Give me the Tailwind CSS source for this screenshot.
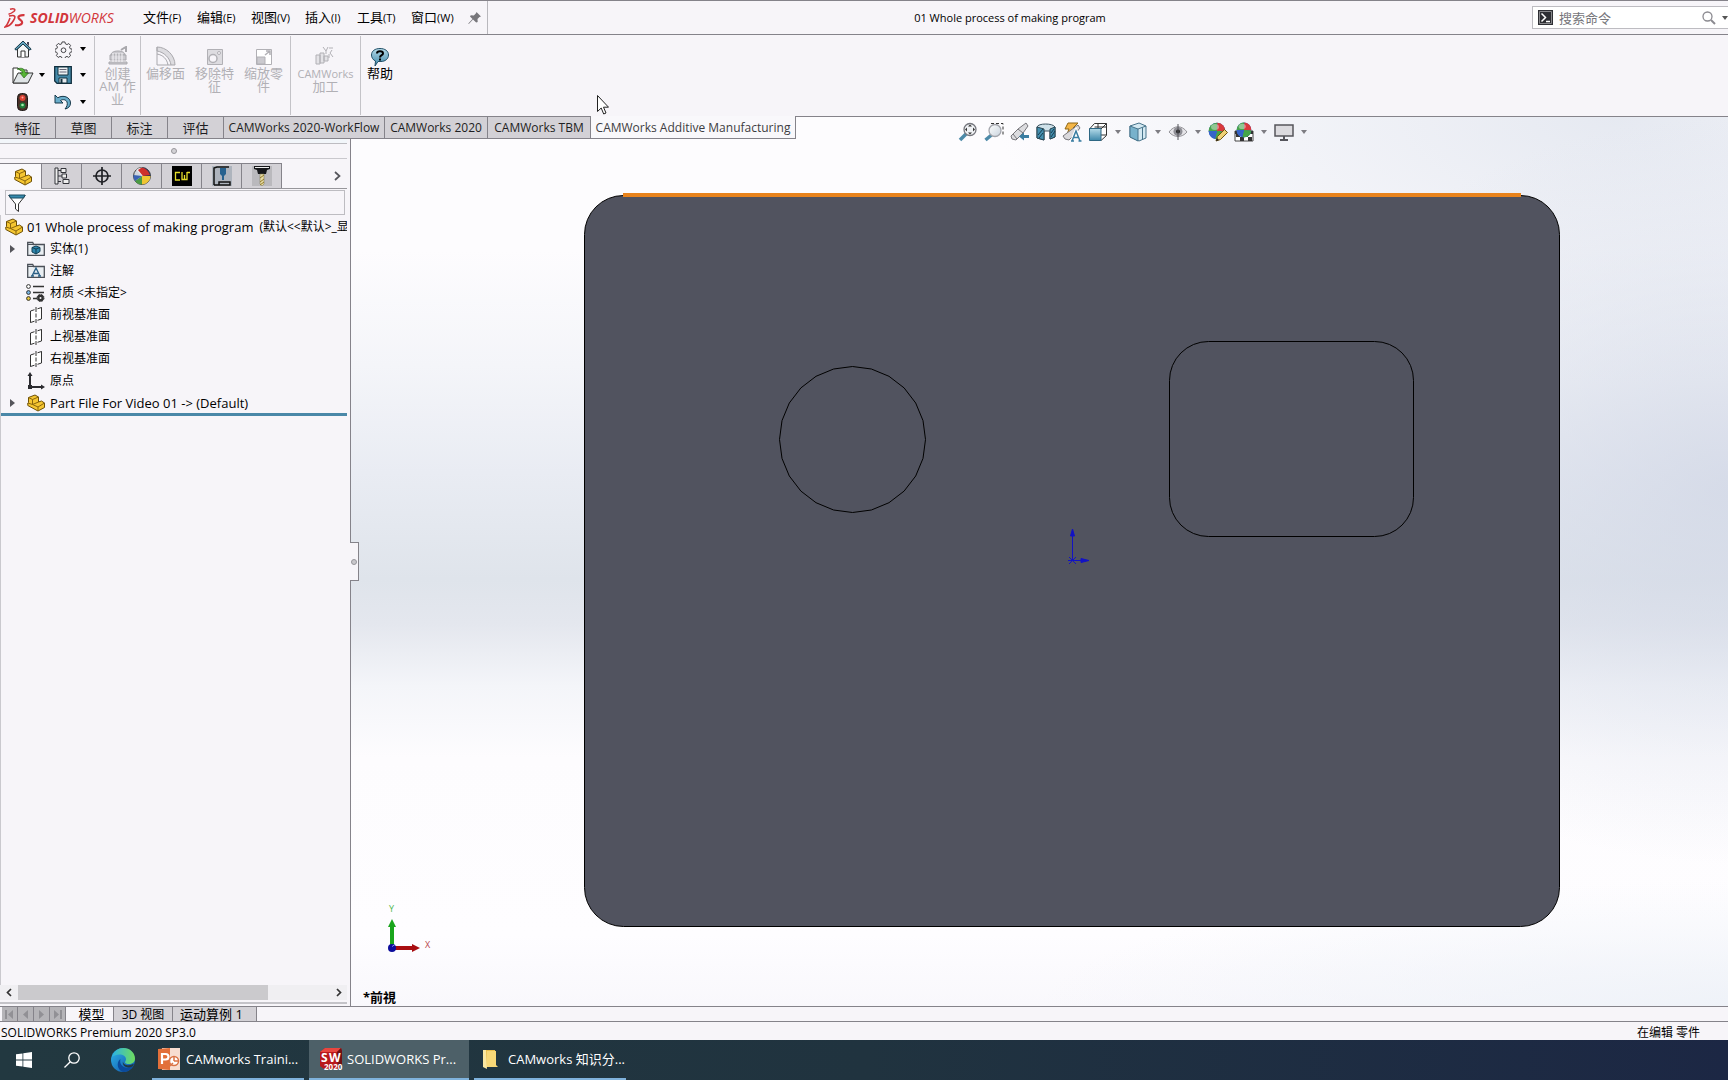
<!DOCTYPE html>
<html lang="zh-CN">
<head>
<meta charset="utf-8">
<title>SOLIDWORKS - 01 Whole process of making program</title>
<script src="https://cdn.jsdelivr.net/npm/@tailwindcss/browser@4"></script>
</head>
<body class="h-screen overflow-hidden flex flex-col bg-[#f7f5f9] text-black text-[12px] leading-4 font-['Open_Sans','Noto_Sans_CJK_SC',sans-serif]">

<svg class="absolute w-0 h-0" aria-hidden="true">
  <defs>
    <linearGradient id="blue" x1="0" y1="0" x2="0" y2="1"><stop offset="0" stop-color="#b5dbe9"/><stop offset="1" stop-color="#3f88aa"/></linearGradient>
    <linearGradient id="glass" x1="0" y1="0" x2="1" y2="1"><stop offset="0" stop-color="#fff"/><stop offset="1" stop-color="#c9d3dd"/></linearGradient>
    <linearGradient id="edgeBlue" x1="0" y1="0" x2="1" y2="1"><stop offset="0" stop-color="#2fb5e8"/><stop offset="1" stop-color="#0d4fa8"/></linearGradient>
    <linearGradient id="edgeGreen" x1="0" y1="0" x2="1" y2="0"><stop offset="0" stop-color="#2bb3e6"/><stop offset="1" stop-color="#6fdc5c"/></linearGradient>
  </defs>
  <symbol id="caret" viewBox="0 0 6 4"><path d="M0 0h6L3 4z" fill="currentColor"/></symbol>
  <symbol id="part" viewBox="0 0 18 18"><path d="M1.500 3.500L8 1l3.500 2v5L14.500 7l3 2v4.500L11 17 .8 11.500V9l.7-.5z" fill="#f5c631" stroke="#6d5008"/><path d="M1.500 3.500L5.500 5.500v5L11 13l6.500-4M5.500 5.500l6-2.500M11 13v4M11.500 8l-6 2.500-4.500-1.500" fill="none" stroke="#8a660d"/></symbol>
  <symbol id="plane" viewBox="0 0 18 18"><path d="M3.500 5v11.500M14.500 1.500V13" stroke="#333" fill="none"/><path d="M3.500 5l11-3.500V13l-11 3.500z" fill="#fff"/><path d="M3.500 5v11.500l4-1.300M14.500 13V1.500l-4 1.300M3.500 5l4-1.300M14.500 13l-4 1.300" stroke="#333" fill="none"/><path d="M9 1v5M9 7.500v4M9 13v4" stroke="#333"/></symbol>
  <symbol id="folderbox" viewBox="0 0 18 18"><path d="M.7 15.300V2.500h5l1 2h10.600v10.800z" fill="#e9eef2" stroke="#4b5058" stroke-width="1.300"/><path d="M1 4.500h6" stroke="#4b5058"/></symbol>
  <symbol id="ball" viewBox="0 0 18 18"><circle cx="9" cy="9" r="8.300" fill="#3b63c6"/><path d="M9 9L.8 10A8.300 8.300 0 0 1 9.500.7z" fill="#47a34b"/><path d="M9 9L9.500.7a8.300 8.300 0 0 1 7.800 8.800z" fill="#d9393b"/><path d="M9 9l8.300.5A8.300 8.300 0 0 1 7 17z" fill="#44a548"/><path d="M9 9l-2 8A8.300 8.300 0 0 1 .7 9z" fill="#3564c9"/><ellipse cx="7" cy="5" rx="4" ry="3" fill="#fff" opacity=".4"/></symbol>
</svg>

<!-- Title bar -->
<header class="h-[35px] shrink-0 flex items-stretch border-t border-b border-[#85838a]">
  <div class="w-[122px] flex items-center pl-1 gap-1 text-[#d2353b]">
    <svg class="w-[22px] h-[22px] shrink-0" viewBox="0 0 22 22" fill="none" stroke="currentColor"><path d="M6 2.200c4.500-1.200 6 .3 3.800 2.300C8 6 6.500 6.800 4.500 7.200" stroke-width="1.600"/><path d="M5 9c6.500-1.500 7 .5 4.500 4.500C7.500 17 4 19.500 1 20c2.500-2 3.500-5 5-9" stroke-width="1.600"/><path d="M20.500 8.200c-4-.3-6.800.8-5.800 3 .8 1.600 4 2.600 3.500 4.600-.5 2.300-4.500 2.800-7.200 2.200" stroke-width="2.200"/></svg>
    <span class="text-[14px] italic"><b>SOLID</b>WORKS</span>
  </div>
  <nav class="flex items-center pl-[21px] gap-[15px] text-[13px]" aria-label="菜单">
    <button class="w-[39px] text-left whitespace-nowrap">文件<span class="text-[11px]">(F)</span></button>
    <button class="w-[39px] text-left whitespace-nowrap">编辑<span class="text-[11px]">(E)</span></button>
    <button class="w-[39px] text-left whitespace-nowrap">视图<span class="text-[11px]">(V)</span></button>
    <button class="w-[37px] text-left whitespace-nowrap">插入<span class="text-[11px]">(I)</span></button>
    <button class="w-[39px] text-left whitespace-nowrap">工具<span class="text-[11px]">(T)</span></button>
    <button class="w-[44px] text-left whitespace-nowrap">窗口<span class="text-[11px]">(W)</span></button>
  </nav>
  <button class="w-[33px] flex items-center justify-end pr-[5px] border-r border-[#b9b8bd]" aria-label="固定">
    <svg class="w-[14px] h-[14px]" viewBox="0 0 14 14" fill="#77767b"><path d="M8.500 1l4.500 4.500-1.500.5-2 2 .2 3-1.500.5L5 8.500.8 13l-.5-.5L4.500 8 2 5.500l.8-1.200 3 .2L8 2.300z"/></svg>
  </button>
  <div class="flex-1 flex items-center justify-center text-[11px]">01 Whole process of making program</div>
  <div class="w-[196px] flex items-center">
    <div class="h-[23px] w-full bg-white border border-r-0 border-[#bdbcc1] flex items-center pl-[5px] gap-[6px]">
      <svg class="w-[15px] h-[15px] shrink-0" viewBox="0 0 15 15"><path d="M0 0h15v15H0z" fill="#2d2e33"/><path d="M1.500 1.500h12v12h-12z" fill="none" stroke="#88888c"/><path d="M3.500 3.500l4 4-4 4M8 11.500h4" fill="none" stroke="#fff" stroke-width="1.500"/></svg>
      <input class="w-[142px] min-w-0 outline-none text-[13px] placeholder:text-[#77767b]" type="text" placeholder="搜索命令" aria-label="搜索命令">
      <svg class="w-[14px] h-[14px] shrink-0" viewBox="0 0 14 14" fill="none" stroke="#8b8a90"><circle cx="5.500" cy="5.500" r="4.500" stroke-width="1.300"/><path d="M9 9l4 4" stroke-width="2"/></svg>
      <svg class="w-[6px] h-1 shrink-0 text-[#555]"><use href="#caret"/></svg>
    </div>
  </div>
</header>

<!-- Ribbon -->
<section class="h-[81px] shrink-0 flex py-px text-[13px] leading-[13px]" aria-label="功能区">
  <div class="w-[94px] grid grid-cols-[48px_46px] grid-rows-3">
    <button class="flex items-center pl-[14px]" aria-label="主页"><svg class="w-[18px] h-[18px]" viewBox="0 0 18 18"><path d="M3.500 9v8h11V9L9 4z" fill="#f3f5f6" stroke="#333"/><path d="M7 17v-6h4v6" fill="#fff" stroke="#333"/><path d="M13 2h2v4l-2-2z" fill="#445"/><path d="M9 1L.8 9l1.200 1.200L9 4l7 6.200L17.200 9z" fill="#65a9c4" stroke="#173747"/></svg></button>
    <button class="flex items-center gap-2 pl-[7px]" aria-label="选项"><svg class="w-[17px] h-[17px]" viewBox="0 0 18 18" fill="none" stroke="#3a3a3f"><path d="M7.500 1h3l.5 2 1.800.8 1.800-1.100 1.900 2-1.100 1.800.7 1.700 2 .4v2.800l-2 .5-.7 1.700 1.100 1.900-2 1.900-1.800-1.100-1.700.7-.5 2h-3l-.5-2-1.700-.7-1.900 1.100-1.900-2 1.100-1.800-.8-1.700-1.900-.5V8.600l2-.5.7-1.700-1.100-1.800 2-2 1.800 1.100L7 3z"/><circle cx="9" cy="9.800" r="2.500"/></svg><svg class="w-[6px] h-1"><use href="#caret"/></svg></button>
    <button class="flex items-center gap-[5px] pl-3" aria-label="打开"><svg class="w-[22px] h-[18px]" viewBox="0 0 22 18"><path d="M1 17V2h5l2 2h7v13z" fill="#fff" stroke="#333"/><path d="M1 17L6 7h15l-5 10z" fill="#dfe4e6" stroke="#333"/><path d="M5 3c5-2 8 0 8.500 4h3L12 12 8 7h2.500C10 5 8 3.500 5 3z" fill="#56b436" stroke="#1f5b12" stroke-width=".6"/></svg><svg class="w-[6px] h-1"><use href="#caret"/></svg></button>
    <button class="flex items-center gap-2 pl-[6px]" aria-label="保存"><svg class="w-[18px] h-[18px]" viewBox="0 0 18 18"><path d="M.7.700h16.600v16.600H3L.7 15z" fill="#4489a8" stroke="#12303f" stroke-width="1.300"/><path d="M4 1h10v8H4z" fill="#eef2f4" stroke="#12303f"/><path d="M5.500 3.500h7M5.500 6h7" stroke="#667"/><path d="M5 12h8v5H5z" fill="#e5eaee" stroke="#12303f"/><path d="M6.500 13h2v4h-2z" fill="#12303f"/></svg><svg class="w-[6px] h-1"><use href="#caret"/></svg></button>
    <button class="flex items-center pl-[17px]" aria-label="重建"><svg class="w-[11px] h-[18px]" viewBox="0 0 11 18"><rect x=".5" y=".5" width="10" height="17" rx="4" fill="#4a3028" stroke="#1e1a18"/><circle cx="5.500" cy="5" r="3" fill="#dc4234"/><circle cx="5.500" cy="4.500" r="1" fill="#ffaaa0"/><circle cx="5.500" cy="12.500" r="3" fill="#1f7b39"/><circle cx="5.500" cy="12" r="1.300" fill="#a3ecac"/></svg></button>
    <button class="flex items-center gap-2 pl-[6px]" aria-label="撤销"><svg class="w-[18px] h-[16px]" viewBox="0 0 18 16"><path d="M1 1v8h8L6.500 6.500C9 5 12 5.500 13 8c.8 2.300 0 4.500-2 7 3-.5 5.500-2.500 5.500-6C16.500 3 9 .5 3.800 3.800z" fill="#6aaecb" stroke="#17384a"/></svg><svg class="w-[6px] h-1"><use href="#caret"/></svg></button>
  </div>
  <div class="w-[47px] border-l border-r border-[#c4c3c8] flex justify-center text-[#b1b0b5]">
    <button disabled class="w-9 flex flex-col items-center pt-[10px] whitespace-nowrap"><svg class="w-5 h-[21px] shrink-0" viewBox="0 0 20 21" fill="#cbcacf" stroke="#a9a8ad"><path d="M3 9c0-2 2-4 7-4s7 2 7 4z"/><path d="M2 9h16v5H2zM1 16h18v2H1z"/><path d="M5 7v9M8 7v9M11 7v9M14 7v9" stroke="#f7f5f9"/><path d="M13 4l3-2 2-1v5" fill="none" stroke-width="2"/></svg><span>创建<br>AM 作<br>业</span></button>
  </div>
  <div class="w-[150px] border-r border-[#c4c3c8] flex text-[#b1b0b5]">
    <button disabled class="w-[49px] flex flex-col items-center pt-[10px]"><svg class="w-5 h-[21px] shrink-0" viewBox="0 0 20 21" fill="none" stroke="#a9a8ad"><path d="M1 1c9 0 18 8 18 18h-4C14 12 8 6 1 5z" fill="#dddce0"/><path d="M1 1v18h14M1 8c6 1 10 5 11 11"/></svg><span>偏移面</span></button>
    <button disabled class="w-[49px] flex flex-col items-center pt-[10px]"><svg class="w-5 h-[21px] shrink-0" viewBox="0 0 20 21" stroke="#b1b0b5"><path d="M2.500 3.500h15v15h-15z" fill="#dddce0"/><circle cx="8" cy="12.500" r="4" fill="#f7f5f9" stroke-width="1.500"/><circle cx="14" cy="7" r="1.500" fill="#f7f5f9"/></svg><span class="w-10">移除特征</span></button>
    <button disabled class="w-[49px] flex flex-col items-center pt-[10px]"><svg class="w-5 h-[21px] shrink-0" viewBox="0 0 20 21" stroke="#b1b0b5"><path d="M2.500 3.500h15v15h-15z" fill="#fff"/><path d="M3 11h8v7H3z" fill="#cbcacf"/><path d="M11 9l5-4M12 5h4v4" fill="none" stroke-width="1.500"/></svg><span class="w-10">缩放零件</span></button>
  </div>
  <div class="w-[70px] border-r border-[#c4c3c8] flex justify-center text-[#b1b0b5]">
    <button disabled class="flex flex-col items-center pt-[10px] text-[11px]"><svg class="w-5 h-[21px] shrink-0" viewBox="0 0 20 21" stroke="#b1b0b5" fill="#e4e3e7"><path d="M1 9h4v9H1zM5 7h4v10H5zM9 10h4v5H9z"/><path d="M8 1l3 4 2-4M11 5v3M14 2h4M17 4l-2 3 3 4M14 8v4" fill="none"/></svg><span>CAMWorks</span><span class="text-[13px]">加工</span></button>
  </div>
  <button class="w-[38px] flex flex-col items-center pt-[10px]"><svg class="w-5 h-[21px] shrink-0" viewBox="0 0 20 21"><path d="M10 2.500c5 0 8.500 2.500 8.500 6.500S15 15.500 11 15.500H8L5 20l.5-5C3 14 1.500 11.500 1.500 9 1.500 5 5 2.500 10 2.500z" fill="url(#blue)" stroke="#215068"/><path d="M7 7.500c0-3 6-3 6 0 0 2-3 1.500-3 4" fill="none" stroke="#000" stroke-width="2"/><path d="M9 12.500h2v2H9z"/></svg><span>帮助</span></button>
</section>

<main class="relative flex-1 min-h-0 flex border-t border-b border-[#85838a]">

  <!-- Command manager tabs, laid over the top of the panel and the graphics area -->
  <nav class="absolute -top-px left-0 z-10 h-[23px] flex border-t border-b border-[#85838a] bg-[#d3d1d6] text-[12px] text-[#1e1e22]" aria-label="命令管理器">
    <button class="w-14 border-r border-[#85838a] text-[13px]">特征</button>
    <button class="w-14 border-r border-[#85838a] text-[13px]">草图</button>
    <button class="w-14 border-r border-[#85838a] text-[13px]">标注</button>
    <button class="w-14 border-r border-[#85838a] text-[13px]">评估</button>
    <button class="w-[161px] border-r border-[#85838a] whitespace-nowrap">CAMWorks 2020-WorkFlow</button>
    <button class="w-[103px] border-r border-[#85838a] whitespace-nowrap">CAMWorks 2020</button>
    <button class="w-[103px] border-r border-[#85838a] whitespace-nowrap">CAMWorks TBM</button>
    <button class="w-[205px] -mt-px pt-px border-r border-[#85838a] bg-[#f9f8fb] text-[#3d3d42] whitespace-nowrap">CAMWorks Additive Manufacturing</button>
  </nav>

  <!-- Feature manager -->
  <aside class="w-[351px] shrink-0 flex flex-col pt-[22px] border-r border-[#85838a]">
    <div class="h-[5px] mr-[3px] border-b border-[#bdbcc1] bg-[#f2f6fa]"></div>
    <div class="h-[15px] mr-[3px] border-b border-[#c9c8cd] flex items-center justify-center"><span class="size-[6px] rounded-full border border-[#97969b] bg-[#d3d2d6]"></span></div>
    <div class="mt-1 mr-[3px] h-[26px] flex border-b border-[#97969b]">
      <button class="w-[41px] h-[26px] flex items-center justify-center pl-1 border-t border-[#85838a] bg-[#f9f8fb]" aria-label="特征树"><svg class="w-[18px] h-[18px]"><use href="#part"/></svg></button>
      <button class="w-10 border-t border-l border-[#85838a] bg-[#d3d1d6] flex items-center justify-center" aria-label="属性"><svg class="w-[18px] h-[18px]" viewBox="0 0 18 18" fill="#eee" stroke="#33343a"><path d="M4 1v16M4 3.500h4M4 9h5M4 14.500h4" fill="none"/><path d="M2 1h3v16H2zM8 1.500h5v4H8zM9 7h4.500v4H9zM10 12.500h6v4h-6z"/></svg></button>
      <button class="w-10 border-t border-l border-[#85838a] bg-[#d3d1d6] flex items-center justify-center" aria-label="尺寸"><svg class="w-[18px] h-[18px]" viewBox="0 0 18 18" fill="none" stroke="#1f2025" stroke-width="1.700"><circle cx="9" cy="9" r="6"/><path d="M9 0v18M0 9h18"/></svg></button>
      <button class="w-10 border-t border-l border-[#85838a] bg-[#d3d1d6] flex items-center justify-center" aria-label="外观"><svg class="w-[18px] h-[18px]" viewBox="0 0 18 18"><circle cx="9" cy="9" r="8.500" fill="#cfd5de" stroke="#444"/><path d="M9 9L9 .5a8.500 8.500 0 0 1 8.500 8.500z" fill="#23355c"/><path d="M9 9L3 3A8.500 8.500 0 0 1 9 .5l6 6z" fill="#e6e9ee"/><path d="M9 9l8.500 0A8.500 8.500 0 0 1 9 17.500z" fill="#efc531"/><path d="M9 9v8.500A8.500 8.500 0 0 1 2 14z" fill="#4b9a43"/><path d="M9 9L2 14A8.500 8.500 0 0 1 .5 8z" fill="#3a62b4"/><path d="M5 3l5 6 7-1C15 3 11 0 8 1z" fill="#cf2f2b"/></svg></button>
      <button class="w-10 border-t border-l border-[#85838a] bg-[#d3d1d6] flex items-center justify-center" aria-label="CAMWorks"><svg class="w-5 h-5" viewBox="0 0 20 20"><path d="M0 0h20v20H0z"/><path d="M8 6.500H3.500v7.500H8M10 6v7.500h5V6M12.500 9v4.500M15 6.500h3" fill="none" stroke="#e6df2a" stroke-width="1.300"/></svg></button>
      <button class="w-10 border-t border-l border-[#85838a] bg-[#d3d1d6] flex items-center justify-center" aria-label="机床"><svg class="w-5 h-5" viewBox="0 0 20 20"><path d="M0 0h20v20H0z" fill="#aeb4bd"/><path d="M2 19V2l3-1h12M2 19h16v-3H7v3" fill="none" stroke="#111" stroke-width="1.500"/><path d="M8 2h6v6l-2 2v4h-2v-4L8 8z" fill="#27628f"/></svg></button>
      <button class="w-[41px] border-t border-l border-r border-[#85838a] bg-[#d3d1d6] flex items-center justify-center" aria-label="刀具"><svg class="w-5 h-5" viewBox="0 0 20 20"><path d="M0 0h20v20H0z" fill="#bab9bd"/><path d="M2 0h16v3l-3 1-1 4H6L5 4 2 3z" fill="#17181b"/><path d="M3 1.500h14" stroke="#eee"/><path d="M8 8h4v10l-2 2-2-2z" fill="#e9dca4" stroke="#77714f" stroke-width=".5"/><path d="M8 12l4-3M8 16l4-3M8 19l4-3" stroke="#8f7a28"/></svg></button>
      <button class="ml-auto w-5 flex items-center justify-center" aria-label="更多"><svg class="w-[7px] h-[10px]" viewBox="0 0 7 10"><path d="M1 1l4.500 4L1 9" fill="none" stroke="#55555b" stroke-width="1.700"/></svg></button>
    </div>
    <label class="mt-px ml-[5px] mr-[5px] h-[25px] border border-[#bdbcc1] flex items-center pl-[2px]">
      <svg class="w-[18px] h-[18px]" viewBox="0 0 18 18"><path d="M.7 1.500h16.600L10.500 10v7.500L7.500 15v-5z" fill="#fff" stroke="#333"/><path d="M1 1h16l-1.500 3h-13z" fill="#368aad" stroke="#184c62"/></svg>
      <input class="flex-1 min-w-0 bg-transparent outline-none" type="text" aria-label="过滤">
    </label>
    <div class="mr-[3px] flex-1 min-h-0 overflow-hidden border-l border-[#cac9ce] whitespace-nowrap">
      <ul class="pt-px border-b-[3px] border-[#4a88a8] h-[201px]">
        <li class="h-[22px] flex items-center pl-1"><svg class="w-[18px] h-[18px] shrink-0"><use href="#part"/></svg><span class="pl-1 text-[13px]">01 Whole process of making program</span><span class="pl-[6px]">(默认&lt;&lt;默认&gt;_显示状态</span></li>
        <li class="h-[22px] flex items-center pl-[9px]"><svg class="w-[5px] h-2 mr-3" viewBox="0 0 5 8"><path d="M0 0l5 4-5 4z" fill="#55555b"/></svg><svg class="w-[18px] h-[18px]" viewBox="0 0 18 18"><use href="#folderbox"/><path d="M9 6l4 1.500v4L9 14l-4-2V7.500z" fill="#2d86ad" stroke="#123f55"/><path d="M5 7.500L9 9l4-1.500M9 9v5" stroke="#123f55" fill="none"/></svg><span class="pl-[5px]">实体(1)</span></li>
        <li class="h-[22px] flex items-center pl-[26px]"><svg class="w-[18px] h-[18px]" viewBox="0 0 18 18"><use href="#folderbox"/><path d="M5 14L9 6l4 8M6.500 11.500h5M4 14h3M11 14h3" fill="none" stroke="#2d6187" stroke-width="1.400"/></svg><span class="pl-[5px]">注解</span></li>
        <li class="h-[22px] flex items-center pl-[25px]"><svg class="w-[19px] h-[18px]" viewBox="0 0 19 18" stroke="#333"><path d="M7 2.500h11M7 8.500h11M7 14.500h4" stroke-width="1.700"/><circle cx="2.500" cy="2.500" r="1.900" fill="#fff"/><circle cx="2.500" cy="8.500" r="1.900" fill="#79b6e4"/><circle cx="2.500" cy="14.500" r="1.900" fill="#e9c73a"/><circle cx="14.500" cy="14" r="2.200" fill="none" stroke-width="2.400"/><circle cx="14.500" cy="14" r="3.500" fill="none" stroke-dasharray="1.600 1.150"/></svg><span class="pl-[5px]">材质 &lt;未指定&gt;</span></li>
        <li class="h-[22px] flex items-center pl-[26px]"><svg class="w-[18px] h-[18px]"><use href="#plane"/></svg><span class="pl-[5px]">前视基准面</span></li>
        <li class="h-[22px] flex items-center pl-[26px]"><svg class="w-[18px] h-[18px]"><use href="#plane"/></svg><span class="pl-[5px]">上视基准面</span></li>
        <li class="h-[22px] flex items-center pl-[26px]"><svg class="w-[18px] h-[18px]"><use href="#plane"/></svg><span class="pl-[5px]">右视基准面</span></li>
        <li class="h-[22px] flex items-center pl-[26px]"><svg class="w-[18px] h-[18px]" viewBox="0 0 18 18"><path d="M3 3v12h12" fill="none" stroke="#2b2b30" stroke-width="2"/><path d="M3 0l2.500 4h-5zM18 15l-4-2.500v5zM1 13h4v4H1z" fill="#2b2b30"/></svg><span class="pl-[5px]">原点</span></li>
        <li class="h-[22px] flex items-center pl-[9px]"><svg class="w-[5px] h-2 mr-3" viewBox="0 0 5 8"><path d="M0 0l5 4-5 4z" fill="#55555b"/></svg><svg class="w-[18px] h-[18px]"><use href="#part"/></svg><span class="pl-[5px] text-[13px]">Part File For Video 01 -&gt; (Default)</span></li>
      </ul>
    </div>
    <div class="h-[15px] mr-[3px] flex bg-[#f0eff2]">
      <button class="w-[18px] flex items-center justify-center" aria-label="向左"><svg class="w-[6px] h-[9px]" viewBox="0 0 6 9"><path d="M5 1L1.500 4.500 5 8" fill="none" stroke="#333" stroke-width="1.700"/></svg></button>
      <div class="flex-1"><div class="w-4/5 h-full bg-[#cbcacd]"></div></div>
      <button class="w-[16px] flex items-center justify-center" aria-label="向右"><svg class="w-[6px] h-[9px]" viewBox="0 0 6 9"><path d="M1 1l3.500 3.500L1 8" fill="none" stroke="#333" stroke-width="1.700"/></svg></button>
    </div>
    <div class="mt-[2px] mb-[2px] mr-[3px] h-[2px] border-t border-b border-[#c4c3c8]"></div>
  </aside>

  <!-- Graphics area -->
  <section class="relative flex-1 min-w-0 bg-[radial-gradient(ellipse_34%_42%_at_100%_42%,rgba(208,214,229,0.75),rgba(214,220,233,0.4)_55%,transparent),radial-gradient(ellipse_45%_30%_at_92%_0%,rgba(222,227,237,0.75),transparent),radial-gradient(ellipse_50%_14%_at_100%_100%,rgba(238,242,248,0.9),transparent),linear-gradient(to_bottom,#fdfcfe_0%,#fdfcfe_15%,#f4f5f9_28%,#e9ecf3_40%,#dfe4eb_52%,#e4e7ee_57%,#f4f5f9_64%,#fdfcfe_72%,#fefdff_92%,#f9f8fc_100%)]">
    <svg class="absolute inset-0 w-full h-full" viewBox="0 0 1377 889" role="img" aria-label="零件前视图">
      <rect x="233.500" y="78.500" width="975" height="731" rx="39" fill="#51535f" stroke="#000"/>
      <path d="M272 78h898" stroke="#e8831c" stroke-width="4"/>
      <path d="M574.500 322.500L572 341.400 564.700 359 553.100 374.100 538 385.700 520.400 393 501.500 395.500 482.600 393 465 385.700 449.900 374.100 438.300 359 431 341.400 428.500 322.500 431 303.600 438.300 286 449.900 270.900 465 259.300 482.600 252 501.500 249.500 520.400 252 538 259.300 553.100 270.900 564.700 286 572 303.600z" fill="none" stroke="#000"/>
      <rect x="818.500" y="224.500" width="244" height="195" rx="39" fill="none" stroke="#000"/>
      <g stroke="#1212c4" fill="#1212c4"><path d="M721.500 443v-24M721 443.500h10M718 440l7 7M725 440l-7 7M717 443.500h5"/><path d="M721.500 412l2 7h-4zM738 443.500l-8 2v-4z"/></g>
      <g><path d="M39 829v-22h4v22z" fill="#19a51c"/><path d="M41 802l4 8h-8z" fill="#19a51c"/><path d="M42 829h15v4H42zM54 829h9v4h-9z" fill="#a80d10"/><path d="M69 831l-8 4v-8z" fill="#a80d10"/><circle cx="41" cy="831" r="4" fill="#0c0c9c"/><path d="M41 829.500l3-2" stroke="#8a8af0"/></g>
      <text x="38" y="795" font-size="9" fill="#4fb84f">Y</text>
      <text x="74" y="831" font-size="9" fill="#b8474b">X</text>
    </svg>

    <div class="absolute top-[3px] left-0 right-0 pl-[604px] h-6 flex items-center text-[#7d7c82]" role="toolbar" aria-label="视图">
      <button class="w-[26px] flex justify-center" aria-label="整屏显示全图"><svg class="w-5 h-5" viewBox="0 0 20 20"><path d="M2 18l6-6" stroke="#4d8aa8" stroke-width="3.500"/><circle cx="12" cy="7.500" r="6" fill="#f0f2f5" stroke="#77787f" stroke-width="1.300"/><path d="M12 2.500l2 2h-4zM12 12.500l2-2h-4zM7 7.500l2-2v4zM17 7.500l-2-2v4z" fill="#333"/></svg></button>
      <button class="w-[26px] flex justify-center" aria-label="局部放大"><svg class="w-5 h-5" viewBox="0 0 20 20"><path d="M7 1.500h12v12" fill="none" stroke="#333" stroke-dasharray="3 2"/><path d="M1.500 18l6-5" stroke="#4d8aa8" stroke-width="3.500"/><circle cx="11" cy="8.500" r="6" fill="url(#glass)" stroke="#a3a5ac" stroke-width="1.300"/></svg></button>
      <button class="w-[26px] flex justify-center" aria-label="上一视图"><svg class="w-5 h-5" viewBox="0 0 20 20"><path d="M1 14l7-7 8-6 2 3-5 7-7 7-4-1z" fill="#dcdcdf" stroke="#77767b"/><path d="M8 7l5 4M3 12l4 5" stroke="#77767b"/><path d="M9 14.500l5-4v2.500h5v3h-5v2.500z" fill="#3b7ea2"/></svg></button>
      <button class="w-[26px] flex justify-center" aria-label="剖面视图"><svg class="w-5 h-5" viewBox="0 0 20 20"><path d="M1 5c1-4 16-4 18 0v10l-5 2V9H8v9l-7-2z" fill="#cfe1e9" stroke="#3d5563"/><path d="M1 5l7 2v11l-7-2zM14 7l5-2v10l-5 2z" fill="#4590b0" stroke="#294653"/><path d="M2 13l5-6M3 16l4-5M15 15l4-6M15 11l3-4" stroke="#173d50"/></svg></button>
      <button class="w-[26px] flex justify-center" aria-label="动态注解"><svg class="w-5 h-5" viewBox="0 0 20 20"><path d="M6 1h10l-5 5h3l-9 6 2-5H3z" fill="#f4b648" stroke="#8d6717"/><path d="M1 14l8-6 7-5 2 3-5 6-6 6-4-1z" fill="#dad9dc" stroke="#77767b"/><path d="M10 19l4-10 4 10M11.500 15.500h5" fill="none" stroke="#fff" stroke-width="3.500"/><path d="M10 19l4-10 4 10M11.500 15.500h5M9 19h3M16.500 19h3" fill="none" stroke="#397da1" stroke-width="1.500"/></svg></button>
      <button class="w-[26px] flex justify-center" aria-label="视图定向"><svg class="w-5 h-5" viewBox="0 0 20 20"><path d="M1.500 7l5-5.500h12v12l-5.500 5" fill="#fff" stroke="#333"/><path d="M13 7l5.500-5.500M6.500 5h12M10 2v5M13 13h5" fill="none" stroke="#333"/><path d="M1.500 6.500h11.500v12H1.500z" fill="url(#blue)" stroke="#2e6783"/></svg></button>
      <button class="w-[14px] flex justify-center" aria-label="视图定向选项"><svg class="w-[6px] h-1"><use href="#caret"/></svg></button>
      <button class="w-[26px] flex justify-center" aria-label="显示样式"><svg class="w-5 h-5" viewBox="0 0 20 20"><path d="M2 4l9-3 7 3v12l-7 3-9-4z" fill="#d4e9f2" stroke="#46738a"/><path d="M2 4l8 3v12l-8-4z" fill="#78b2cc" stroke="#46738a"/><path d="M10 7l8-3M14.500 5.500V17" stroke="#46738a"/></svg></button>
      <button class="w-[14px] flex justify-center" aria-label="显示样式选项"><svg class="w-[6px] h-1"><use href="#caret"/></svg></button>
      <button class="w-[26px] flex justify-center" aria-label="隐藏项目"><svg class="w-5 h-5" viewBox="0 0 20 20"><path d="M1 10c5-7 13-7 18 0-5 6-13 6-18 0z" fill="#e5e4e8" stroke="#97969b"/><circle cx="10" cy="9.500" r="4.500" fill="#8e8e95"/><circle cx="10" cy="9.500" r="2" fill="#222"/><path d="M10 2v16" stroke="#55555b"/></svg></button>
      <button class="w-[14px] flex justify-center" aria-label="隐藏项目选项"><svg class="w-[6px] h-1"><use href="#caret"/></svg></button>
      <button class="w-[26px] flex justify-center" aria-label="编辑外观"><svg class="w-5 h-5" viewBox="0 0 20 20"><use href="#ball" width="18" height="18"/><path d="M8 19l1.500-4.500 7-7 3 3-7 7z" fill="#eed176" stroke="#6d5312"/><path d="M8 19l1-3 2 2z" fill="#222"/></svg></button>
      <button class="w-[26px] flex justify-center" aria-label="应用布景"><svg class="w-5 h-5" viewBox="0 0 20 20"><path d="M1 9h18v10H1z" fill="#fff" stroke="#444"/><path d="M1 9h3v3H1zM16 9h3v3h-3zM2 15h4v-3H2zM6 15h4v4H6zM10 12h4v3h-4zM14 15h4v4h-4z" fill="#333"/><use href="#ball" x="2" y="0" width="16" height="16"/></svg></button>
      <button class="w-[14px] flex justify-center" aria-label="布景选项"><svg class="w-[6px] h-1"><use href="#caret"/></svg></button>
      <button class="w-[26px] flex justify-center" aria-label="视图设定"><svg class="w-5 h-5" viewBox="0 0 20 20"><path d="M1 3h18v11H1z" fill="#dcdbdf" stroke="#55555b" stroke-width="1.500"/><path d="M10 14v4M6 18h8" stroke="#55555b" stroke-width="2"/></svg></button>
      <button class="w-[14px] flex justify-center" aria-label="视图设定选项"><svg class="w-[6px] h-1"><use href="#caret"/></svg></button>
    </div>

    <div class="absolute left-3 bottom-px font-bold text-[13px]">*前視</div>
    <button class="absolute -left-px top-[425px] w-[9px] h-[39px] bg-[#f7f5f9] border border-l-0 border-[#85838a] flex items-center justify-center" aria-label="折叠面板"><span class="size-[6px] shrink-0 rounded-full border border-[#97969b] bg-[#c9c8cc]"></span></button>
  </section>

  <!-- Mouse pointer -->
  <svg class="absolute left-[597px] -top-[22px] z-20 w-3 h-5" viewBox="0 0 12 20"><path d="M.5.500v16l3.700-3.500 2.500 6 2.300-1-2.500-5.800h5z" fill="#fff" stroke="#222"/></svg>
</main>

<!-- Model and study tabs -->
<nav class="h-[15px] shrink-0 flex text-[12px] leading-[13px] border-b border-[#85838a] pl-[2px]" aria-label="视图标签">
  <div class="flex gap-px bg-[#85838a] pr-px">
    <button disabled class="w-[15px] bg-[#b5b4b8] flex items-center justify-center" aria-label="第一个"><svg class="w-[9px] h-[9px]" viewBox="0 0 9 9" fill="#919095"><path d="M0 0h2v9H0zM8 0v9L3 4.500z"/></svg></button>
    <button disabled class="w-[15px] bg-[#b5b4b8] flex items-center justify-center" aria-label="上一个"><svg class="w-[9px] h-[9px]" viewBox="0 0 9 9" fill="#919095"><path d="M7 0v9L2 4.500z"/></svg></button>
    <button disabled class="w-[15px] bg-[#b5b4b8] flex items-center justify-center" aria-label="下一个"><svg class="w-[9px] h-[9px]" viewBox="0 0 9 9" fill="#919095"><path d="M2 0v9l5-4.500z"/></svg></button>
    <button disabled class="w-[15px] bg-[#b5b4b8] flex items-center justify-center" aria-label="最后一个"><svg class="w-[9px] h-[9px]" viewBox="0 0 9 9" fill="#919095"><path d="M7 0h2v9H7zM1 0v9l5-4.500z"/></svg></button>
  </div>
  <button class="w-12 pl-1 text-[13px] border-r border-[#85838a]">模型</button>
  <button class="w-[59px] bg-[#d3d1d6] border-r border-[#85838a]">3D 视图</button>
  <button class="w-[84px] bg-[#d3d1d6] border-r border-[#85838a] pl-[7px] text-left text-[13px] whitespace-nowrap">运动算例 1</button>
</nav>

<footer class="h-[18px] shrink-0 flex items-center justify-between pt-[3px] pl-px pr-7">
  <span>SOLIDWORKS Premium 2020 SP3.0</span>
  <span>在编辑 零件</span>
</footer>

<!-- Windows taskbar -->
<nav class="h-10 shrink-0 flex bg-linear-to-r from-[#223840] via-[#20333f] to-[#1c2744] text-[13px] text-white" aria-label="任务栏">
  <button class="w-12 flex items-center justify-center" aria-label="开始"><svg class="w-4 h-4" viewBox="0 0 16 16" fill="#fff"><path d="M0 2.300L6.500 1.400v6.200H0zM7.300 1.300L16 0v7.600H7.300zM0 8.400h6.500v6.200L0 13.700zM7.300 8.400H16V16l-8.700-1.300z"/></svg></button>
  <button class="w-12 flex items-center justify-center" aria-label="搜索"><svg class="w-4 h-4" viewBox="0 0 16 16" fill="none" stroke="#fff" stroke-width="1.300"><circle cx="10" cy="6" r="5.200"/><path d="M6.300 9.700L.5 15.500"/></svg></button>
  <button class="w-14 flex items-center justify-center pr-[3px]" aria-label="Edge"><svg class="w-6 h-6" viewBox="0 0 24 24"><circle cx="12" cy="12" r="12" fill="url(#edgeBlue)"/><path d="M1 9C3 3 7.500 0 12.500 0 19 0 24 5 24 10.500c0 4-3 5.500-6 5.500-2.500 0-4-.8-4-1.800 0-.9 1-1.200 1-3C15 8.500 12 6.500 8.500 6.500 5 6.500 2 8 1 9z" fill="url(#edgeGreen)"/><path d="M9.500 11c-1.500 5 2.500 9.500 8 8.500 2-.4 3.500-1.300 4.500-2-2 4.500-6 6.500-10 6.500-6-2-7-10-2.500-13z" fill="#0b4a9b"/><path d="M12 13.500c0 3.500 5.500 5 9.500 2.800 1.500-.7 1.500.7.500 1.700-5 3.500-11.500 0-10-4.500z" fill="#223840"/></svg></button>
  <button class="w-[152px] flex items-center pl-[6px] gap-[6px] border-b-2 border-[#7fb2dc]"><svg class="w-[22px] h-[22px]" viewBox="0 0 22 22"><path d="M4 0h18v22H4z" fill="#f7ddd0"/><path d="M0 1l12-1v22L0 21z" fill="#e2703a"/><path d="M4 16V6h3.500c4 0 4 5.500 0 5.500H4" fill="none" stroke="#fff" stroke-width="2.200"/><circle cx="16" cy="13" r="4.500" fill="#fff" stroke="#db7446" stroke-width="1.500"/><path d="M16 13V8.500M16 13h4.500M12 18l3-3" stroke="#db7446" stroke-width="1.500"/></svg><span>CAMworks Traini...</span></button>
  <button class="ml-[5px] w-40 flex items-center pl-[10px] gap-1 border-b-2 border-[#7fb2dc] bg-[#4d6068]"><svg class="w-6 h-6" viewBox="0 0 24 24"><path d="M1 5l5-4h16l1 3v13l-4 5H5l-4-3z" fill="#b8191c"/><path d="M1 5l5-4h16l-4 4z" fill="#e8463f"/><path d="M18 5l4-4 1 3v13l-4 5z" fill="#701013"/><text x="2" y="15" font-size="12" font-weight="bold" fill="#fff">S</text><text x="10" y="15" font-size="12" font-weight="bold" fill="#fff">W</text><text x="5" y="23" font-size="8" font-weight="bold" fill="#fff">2020</text></svg><span>SOLIDWORKS Pr...</span></button>
  <button class="ml-[5px] w-[152px] flex items-center pl-[9px] gap-[10px] border-b-2 border-[#7fb2dc]"><svg class="w-[15px] h-5" viewBox="0 0 15 20"><path d="M0 1h12l1 17H0z" fill="#e9be4c"/><path d="M4 2h9v14l2 2H2l2-1z" fill="#f8d877"/><path d="M0 1h3l1 19-4-2z" fill="#fbe7a0"/></svg><span>CAMworks 知识分...</span></button>
</nav>
</body>
</html>
